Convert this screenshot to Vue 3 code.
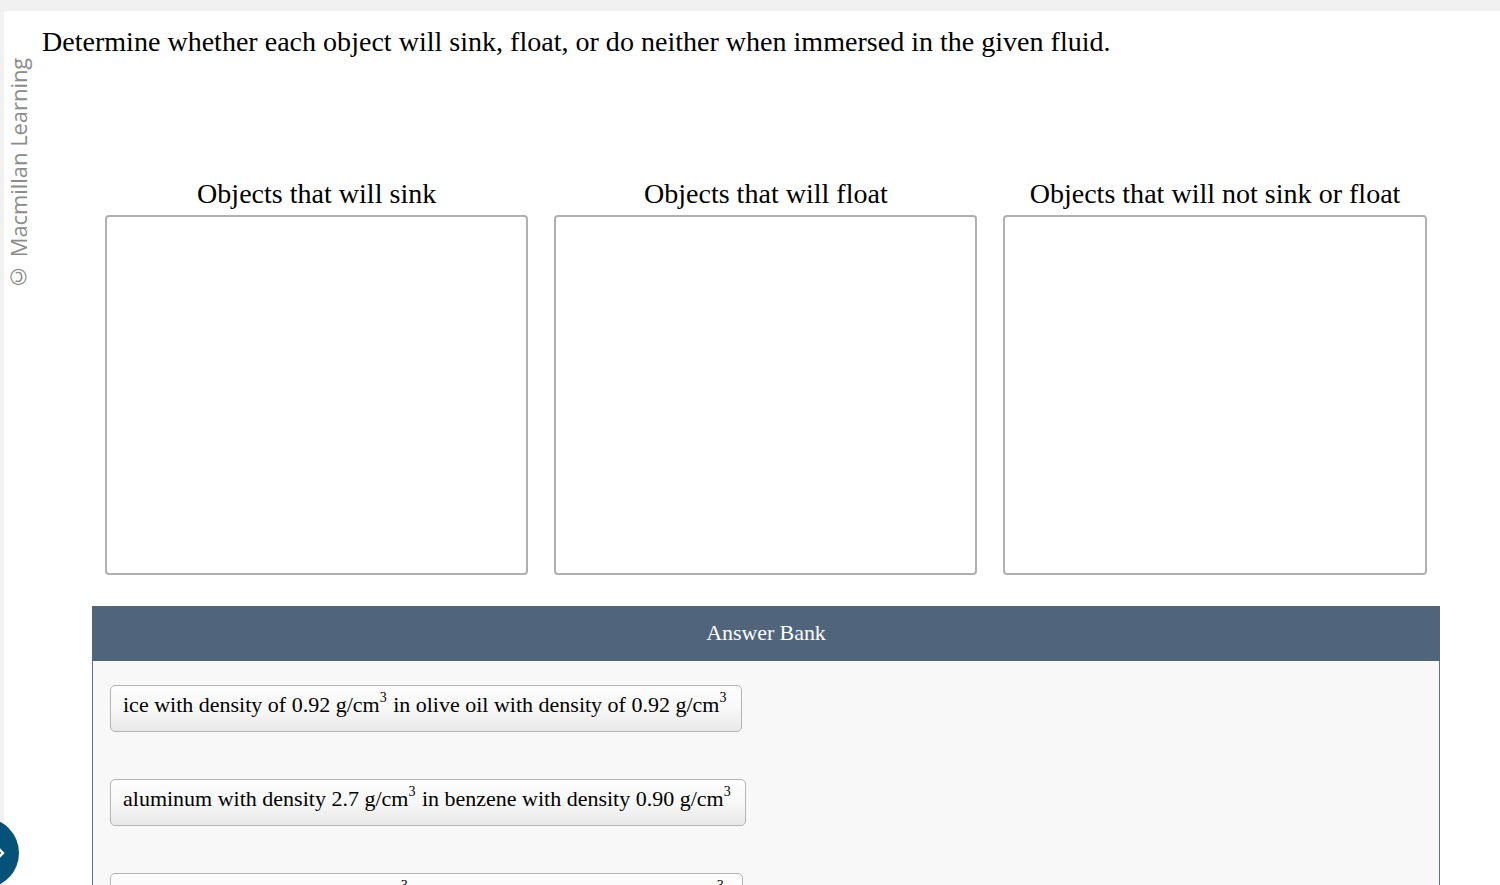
<script setup>
const bins = [
  'Objects that will sink',
  'Objects that will float',
  'Objects that will not sink or float',
]
const answers = [
  { a: 'ice with density of 0.92 g/cm', b: ' in olive oil with density of 0.92 g/cm' },
  { a: 'aluminum with density 2.7 g/cm', b: ' in benzene with density 0.90 g/cm' },
  { a: 'lead with density of 11.34 g/cm', b: ' in water with density of 1.00 g/cm' },
]
</script>

<template>
  <div class="viewport">
    <div class="sheet">
      <div class="credit-col"><span class="credit">© Macmillan Learning</span></div>
      <main class="content">
        <p class="prompt">Determine whether each object will sink, float, or do neither when immersed in the given fluid.</p>
        <section class="bins">
          <div v-for="bin in bins" :key="bin" class="bin">
            <div class="bin-title">{{ bin }}</div>
            <div class="bin-box"></div>
          </div>
        </section>
        <section class="bank">
          <header class="bank-head">Answer Bank</header>
          <div class="bank-body">
            <div v-for="item in answers" :key="item.a" class="chip">{{ item.a }}<sup>3</sup>{{ item.b }}<sup>3</sup></div>
          </div>
        </section>
      </main>
    </div>
    <div class="fab">
      <svg width="8" height="12" viewBox="0 0 8 12" class="fab-icon"><path d="M1 1l5 5-5 5" fill="none" stroke="#fff" stroke-width="2.4"/></svg>
    </div>
  </div>
</template>

<style>
html, body { margin: 0; overflow: hidden; background: #fff; }
</style>

<style scoped>
.viewport {
  position: relative;
  width: 1500px;
  height: 885px;
  overflow: hidden;
  background: #f1f1f1;
  padding: 11px 0 0 4px;
  box-sizing: border-box;
  font-family: "Liberation Serif", serif;
  font-variant-ligatures: common-ligatures;
  text-rendering: optimizeLegibility;
  color: #000;
}
.sheet {
  display: flex;
  height: 874px;
  background: #fff;
  overflow: hidden;
}
.credit-col {
  width: 38px;
  flex: none;
  display: flex;
  justify-content: center;
  padding-top: 45px;
  box-sizing: border-box;
}
.credit {
  writing-mode: vertical-rl;
  transform: rotate(180deg);
  height: 236px;
  margin-left: -8px;
  font-family: "Open Sans", sans-serif;
  font-size: 21.9px;
  line-height: 30px;
  color: #8c8c8c;
  white-space: nowrap;
  text-align: left;
}
.content {
  flex: 1;
  min-width: 0;
}
.prompt {
  margin: 0;
  padding-top: 14px;
  font-size: 28.05px;
  line-height: 33px;
  white-space: nowrap;
}
.bins {
  display: flex;
  gap: 25.9px;
  margin: 119px 0 0 63px;
}
.bin { width: 423.3px; flex: none; }
.bin-title {
  font-size: 28.05px;
  line-height: 33px;
  text-align: center;
  white-space: nowrap;
  margin-bottom: 5px;
}
.bin-box {
  height: 359.5px;
  box-sizing: border-box;
  border: 2px solid #b0b0b0;
  border-radius: 4px;
  background: #fff;
}
.bank {
  width: 1348px;
  margin: 31px 0 0 50px;
  box-sizing: border-box;
  border: 1px solid #5d738d;
  border-top: 0;
  background: #f8f8f8;
}
.bank-head {
  height: 55px;
  margin: 0 -1px;
  background: #50647b;
  color: #fff;
  text-align: center;
  font-size: 22px;
  line-height: 54px;
  letter-spacing: -0.08px;
}
.bank-body {
  display: flex;
  flex-direction: column;
  align-items: flex-start;
  gap: 47px;
  padding: 24px 17px;
}
.chip {
  height: 47px;
  box-sizing: border-box;
  padding: 0 13.5px 0 12px;
  border: 1px solid #b4b4b4;
  border-radius: 5px;
  background: linear-gradient(#fdfdfd 0%, #f8f8f8 50%, #e8e8e8 100%);
  font-size: 22px;
  line-height: 38px;
  color: #000;
  white-space: nowrap;
}
.chip:last-child {
  min-width: 633px;
}
.chip sup {
  font-size: 14px;
  line-height: 0;
  vertical-align: 10px;
  margin-right: 1px;
}
.fab {
  position: absolute;
  left: -51.5px;
  top: 818px;
  width: 70px;
  height: 70px;
  border-radius: 50%;
  background: #04527a;
}
.fab-icon {
  position: absolute;
  right: 14px;
  top: 29px;
}
</style>
